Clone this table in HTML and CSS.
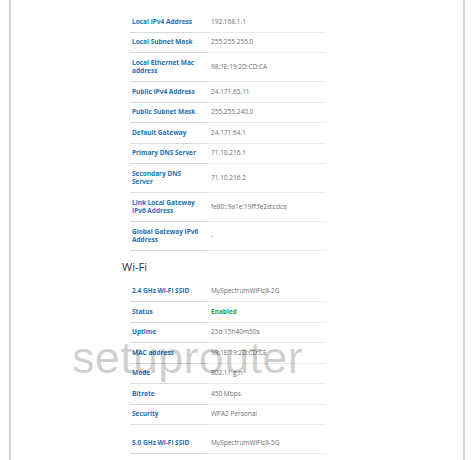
FILE: index.html
```html
<!doctype html>
<html lang="en">
  <head>
    <title>Router status</title>
    <meta charset="UTF-8">
    <link rel="stylesheet" href="styles.css">
  </head>
  <body>
    <div class="frame">
      <div class="content">
        <table class="infoTable">
          <tr><th>Local IPv4 Address</th><td>192.168.1.1</td></tr>
          <tr><th>Local Subnet Mask</th><td>255.255.255.0</td></tr>
          <tr><th>Local Ethernet Mac address</th><td>98:1E:19:2D:CD:CA</td></tr>
          <tr><th>Public IPv4 Address</th><td>24.171.65.11</td></tr>
          <tr><th>Public Subnet Mask</th><td>255.255.240.0</td></tr>
          <tr><th>Default Gateway</th><td>24.171.64.1</td></tr>
          <tr><th>Primary DNS Server</th><td>71.10.216.1</td></tr>
          <tr><th>Secondary DNS Server</th><td>71.10.216.2</td></tr>
          <tr><th>Link Local Gateway IPv6 Address</th><td>fe80::9a1e:19ff:fe2d:cdca</td></tr>
          <tr><th>Global Gateway IPv6 Address</th><td>-</td></tr>
        </table>

        <h2 class="sectionTitle">Wi-Fi</h2>

        <table class="infoTable">
          <tr><th>2.4 GHz Wi-Fi SSID</th><td>MySpectrumWiFic8-2G</td></tr>
          <tr><th>Status</th><td class="enabled">Enabled</td></tr>
          <tr><th>Uptime</th><td>25d 15h40m50s</td></tr>
          <tr><th>MAC address</th><td>98:1E:19:2D:CD:CE</td></tr>
          <tr><th>Mode</th><td>802.11 g,n</td></tr>
          <tr><th>Bitrate</th><td>450 Mbps</td></tr>
          <tr><th>Security</th><td>WPA2 Personal</td></tr>
        </table>

        <table class="infoTable band">
          <tr><th>5.0 GHz Wi-Fi SSID</th><td>MySpectrumWiFic8-5G</td></tr>
        </table>
      </div>
    </div>

    <div class="watermark">setuprouter</div>
  </body>
</html>
```

FILE: styles.css
```css
html, body {
  margin: 0;
  height: 100%;
  overflow: hidden;
  background-color: #fff;
  font-family: "Open Sans", "Liberation Sans", sans-serif;
}

.frame {
  margin: 0 9px;
  min-height: 100%;
  border-left: 2px solid #d4d4d4;
  border-right: 2px solid #d4d4d4;
  box-sizing: border-box;
}

.content {
  padding: 12px 0 0 111px;
}

.infoTable {
  margin-left: 8px;
  border-collapse: collapse;
  table-layout: fixed;
  width: 196px;
  font-size: 6.5px;
  line-height: 8.5px;
}

.infoTable th {
  width: 68px;
  padding: 5.5px 7px 5.5px 2px;
  text-align: left;
  vertical-align: middle;
  color: #2470b3;
  font-weight: bold;
  border-bottom: 1px solid #d9d9d9;
}

.infoTable td {
  padding: 5.5px 3px 5.5px 4px;
  color: #707070;
  border-bottom: 1px solid #ebebeb;
}

.infoTable td.enabled {
  color: #2f9e44;
  font-weight: bold;
}

.band {
  margin-top: 8px;
}

.sectionTitle {
  margin: 9px 0 7.5px 0;
  font-size: 11px;
  line-height: 14px;
  font-weight: normal;
  color: #333;
}

.watermark {
  position: absolute;
  left: 72px;
  top: 335px;
  font-family: "Liberation Sans", Arial, sans-serif;
  font-size: 45px;
  line-height: 1;
  letter-spacing: 0.3px;
  color: rgba(0, 0, 0, 0.19);
  pointer-events: none;
}
```
